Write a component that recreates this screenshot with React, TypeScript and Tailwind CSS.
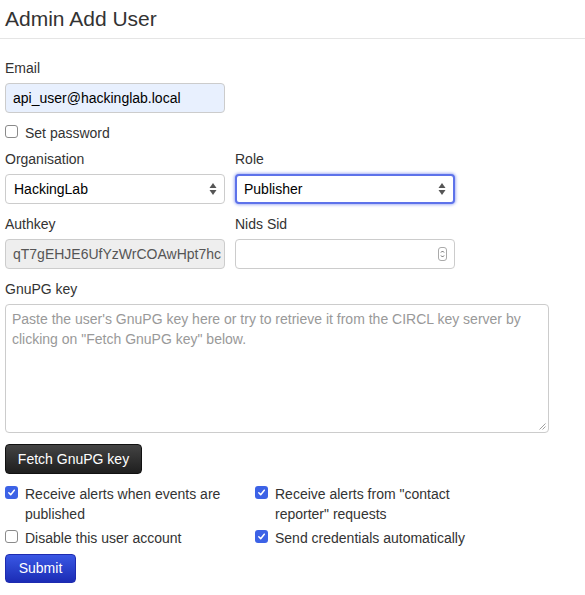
import { useState } from 'react';

function SelectArrows() {
  return (
    <svg width="8" height="14" viewBox="0 0 8 14" className="absolute right-[7px] top-1/2 -translate-y-1/2">
      <path d="M4 1 L7.5 6 H0.5 Z" fill="#555" />
      <path d="M4 13 L7.5 8 H0.5 Z" fill="#555" />
    </svg>
  );
}

function Check({ checked }: { checked: boolean }) {
  if (checked) {
    return (
      <span className="mt-[2px] flex h-[13px] w-[13px] shrink-0 items-center justify-center rounded-[3px] bg-[#3c62e6]">
        <svg width="9" height="9" viewBox="0 0 9 9">
          <path d="M1.8 4.8 L3.7 6.7 L7.3 2.2" fill="none" stroke="#fff" strokeWidth="1.5" strokeLinecap="round" strokeLinejoin="round" />
        </svg>
      </span>
    );
  }
  return <span className="mt-[2px] h-[13px] w-[13px] shrink-0 rounded-[3px] border border-[#8a8a8a] bg-white" />;
}

function CheckRow({ label, checked, className = '' }: { label: string; checked: boolean; className?: string }) {
  return (
    <label className={`flex gap-[7px] leading-[20px] ${className}`}>
      <Check checked={checked} />
      <span className="w-[225px]">{label}</span>
    </label>
  );
}

export default function App() {
  const [email] = useState('api_user@hackinglab.local');

  return (
    <div className="min-h-[595px] bg-white px-[5px] text-[14px] text-[#333] font-['Liberation_Sans',Arial,sans-serif]">
      {/* Título */}
      <div className="mb-[19px] border-b border-[#e5e5e5] text-[21px] leading-[38px] -mx-[5px] px-[5px]">
        Admin Add User
      </div>

      {/* Email */}
      <div className="leading-[20px] mb-[5px]">Email</div>
      <div className="flex h-[30px] w-[220px] items-center rounded-[4px] border border-[#ccc] bg-[#e8f0fe] px-[7px] text-[14px] text-black">
        {email}
      </div>
      <div className="mt-[10px]">
        <label className="flex gap-[7px] leading-[20px]">
          <Check checked={false} />
          <span>Set password</span>
        </label>
      </div>

      {/* Organisation / Role */}
      <div className="mt-[6px] flex gap-[10px]">
        <div className="w-[220px]">
          <div className="leading-[20px] mb-[5px]">Organisation</div>
          <div className="relative flex h-[30px] items-center rounded-[4px] border border-[#ccc] bg-white px-[8px] text-black">
            HackingLab
            <SelectArrows />
          </div>
        </div>
        <div className="w-[220px]">
          <div className="leading-[20px] mb-[5px]">Role</div>
          <div className="relative flex h-[30px] items-center rounded-[4px] border-2 border-[#5d72ea] bg-white px-[7px] text-black shadow-[0_0_3px_1px_rgba(93,114,234,0.55)]">
            Publisher
            <SelectArrows />
          </div>
        </div>
      </div>

      {/* Authkey / Nids Sid */}
      <div className="mt-[10px] flex gap-[10px]">
        <div className="w-[220px]">
          <div className="leading-[20px] mb-[5px]">Authkey</div>
          <div className="flex h-[30px] items-center overflow-hidden whitespace-nowrap rounded-[4px] border border-[#ccc] bg-[#eee] px-[7px] text-[#555]">
            qT7gEHJE6UfYzWrCOAwHpt7hc
          </div>
        </div>
        <div className="w-[220px]">
          <div className="leading-[20px] mb-[5px]">Nids Sid</div>
          <div className="relative h-[30px] rounded-[4px] border border-[#ccc] bg-white">
            <span className="absolute right-[7px] top-1/2 flex h-[14px] w-[9px] -translate-y-1/2 flex-col items-center justify-center rounded-[3px] border border-[#aaa]">
              <svg width="5" height="10" viewBox="0 0 5 10">
                <path d="M1 3.5 L2.5 2 L4 3.5" fill="none" stroke="#555" strokeWidth="0.9" />
                <path d="M1 6.5 L2.5 8 L4 6.5" fill="none" stroke="#555" strokeWidth="0.9" />
              </svg>
            </span>
          </div>
        </div>
      </div>

      {/* GnuPG */}
      <div className="mt-[10px] leading-[20px] mb-[5px]">GnuPG key</div>
      <div className="relative h-[129px] w-[544px] rounded-[4px] border border-[#ccc] bg-white px-[6px] py-[4px] leading-[20px] text-[#999]">
        Paste the user's GnuPG key here or try to retrieve it from the CIRCL key server by clicking on "Fetch GnuPG key" below.
        <svg width="7" height="7" viewBox="0 0 7 7" className="absolute bottom-[2px] right-[2px]">
          <path d="M6.5 0.5 L0.5 6.5 M6.5 3.5 L3.5 6.5" stroke="#888" strokeWidth="0.8" />
        </svg>
      </div>

      <button className="mt-[11px] block h-[30px] w-[137px] rounded-[4px] border border-[#111] bg-gradient-to-b from-[#444] to-[#1f1f1f] text-[14px] text-white">
        Fetch GnuPG key
      </button>

      {/* Opciones */}
      <div className="mt-[10px] grid grid-cols-[250px_250px]">
        <CheckRow checked label="Receive alerts when events are published" />
        <CheckRow checked label={'Receive alerts from "contact reporter" requests'} />
        <CheckRow checked={false} label="Disable this user account" className="mt-[4px]" />
        <CheckRow checked label="Send credentials automatically" className="mt-[4px]" />
      </div>

      <button className="mt-[6px] block h-[29px] w-[71px] rounded-[4px] border border-[#1e2bb0] bg-gradient-to-b from-[#3a57e4] to-[#1c2cb5] text-[14px] text-white">
        Submit
      </button>
    </div>
  );
}
